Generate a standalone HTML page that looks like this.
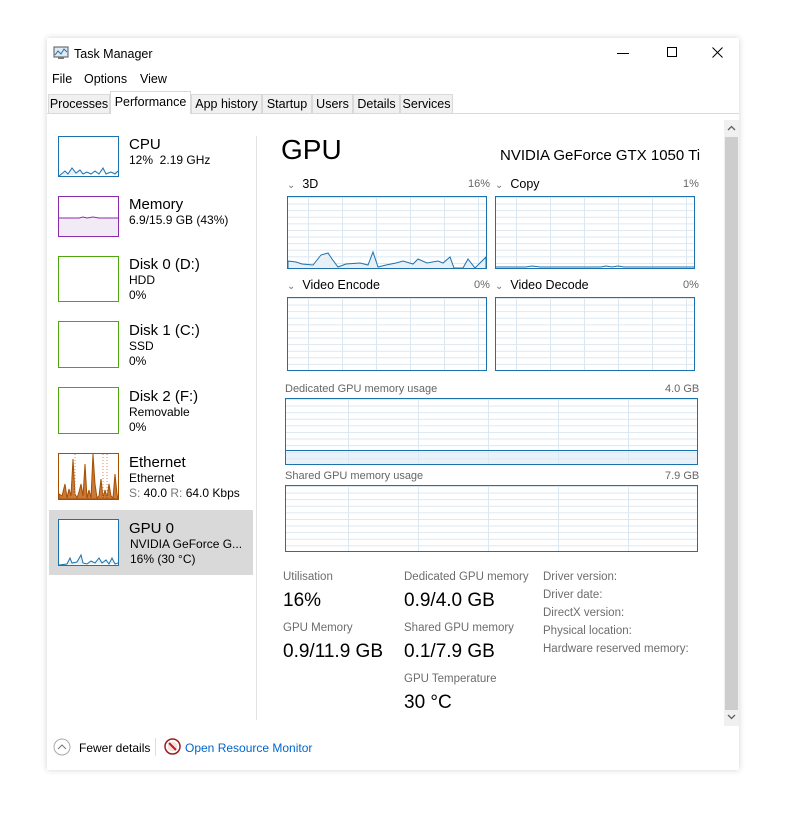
<!DOCTYPE html>
<html><head><meta charset="utf-8"><style>
*{margin:0;padding:0;box-sizing:border-box}
body{width:788px;height:817px;background:#fff;font-family:"Liberation Sans",sans-serif;position:relative;overflow:hidden;color:#000}
.a{position:absolute;white-space:nowrap}
#win{position:absolute;left:47px;top:38px;width:692px;height:732px;background:#fff;box-shadow:0 0 6px rgba(0,0,0,.18)}
.tab{position:absolute;top:94px;height:20px;background:#f0f0f0;border:1px solid #d9d9d9;font-size:12.5px;line-height:19px;text-align:center;color:#000}
.thumb{position:absolute;left:58px;width:61px;border:1px solid}
.g{position:absolute;border:1px solid #1c72ad;background-color:#fff;
background-image:linear-gradient(#dbe7f1 1px,transparent 1px),linear-gradient(90deg,#dbe7f1 1px,transparent 1px);background-size:100% 6.6px,34px 100%;background-position:0 0,20px 0}
.gb{background-size:100% 6.6px,70px 100%;background-position:0 0,62px 0}
.lbl{font-size:12.5px;color:#000}
.sm{font-size:11px;color:#666}
.t1{font-size:15px}
.t2{font-size:12px}
.k{font-size:11.5px;color:#6d6d6d}
.v{font-size:19px;color:#000}
.t{top:2px;position:relative}
</style></head><body>
<div id="win"></div>
<svg class="a" style="left:53px;top:46px" width="16" height="14"><rect x="1" y="1" width="14" height="10" fill="#dfe9f3" stroke="#555"/><polyline points="2,9 5,5 8,8 11,3 14,6" fill="none" stroke="#1c72ad"/><rect x="5" y="11" width="6" height="2" fill="#777"/></svg>
<div class="a" style="left:74px;top:47px;font-size:12.5px">Task Manager</div>
<div class="a" style="left:617px;top:53px;width:12px;height:1px;background:#000"></div>
<div class="a" style="left:667px;top:47px;width:10px;height:10px;border:1px solid #000"></div>
<svg class="a" style="left:712px;top:47px" width="11" height="11"><path d="M0.5 0.5L10.5 10.5M10.5 0.5L0.5 10.5" stroke="#000" stroke-width="1"/></svg>
<div class="a" style="left:52px;top:72px;font-size:12.5px">File</div>
<div class="a" style="left:84px;top:72px;font-size:12.5px">Options</div>
<div class="a" style="left:140px;top:72px;font-size:12.5px">View</div>
<div class="a" style="left:47px;top:113px;width:692px;height:1px;background:#d9d9d9"></div>
<div class="tab" style="left:48px;width:62px">Processes</div>
<div class="tab" style="left:110px;top:91px;height:23px;width:81px;background:#fff;border-bottom:none;line-height:20px">Performance</div>
<div class="tab" style="left:191px;width:71px">App history</div>
<div class="tab" style="left:262px;width:50px">Startup</div>
<div class="tab" style="left:312px;width:41px">Users</div>
<div class="tab" style="left:353px;width:47px">Details</div>
<div class="tab" style="left:400px;width:53px">Services</div>
<div class="a" style="left:49px;top:510px;width:204px;height:65px;background:#d9d9d9"></div>
<div class="a" style="left:256px;top:136px;width:1px;height:584px;background:#e3e3e3"></div>
<div class="thumb" style="top:136px;height:41px;border-color:#1c72ad"><svg width="59" height="39" style="display:block"><polyline points="0,39 6,34 9,37 13,31 17,36 21,33 24,37 28,35 32,37 36,34 40,37 44,31 47,37 52,35 56,37 59,34" fill="#e7f0f7" stroke="#1c72ad"/></svg></div>
<div class="a t1" style="left:129px;top:136px">CPU</div>
<div class="a t2" style="left:129px;top:153px">12%&nbsp; 2.19 GHz</div>
<div class="thumb" style="top:196px;height:41px;border-color:#8b2bab"><svg width="59" height="39" style="display:block"><rect x="0" y="21" width="59" height="18" fill="#f2eaf5"/><polyline points="0,21 20,21 24,20 28,21 34,20 40,21 59,21" fill="none" stroke="#8b2bab"/></svg></div>
<div class="a t1" style="left:129px;top:196px">Memory</div>
<div class="a t2" style="left:129px;top:213px">6.9/15.9 GB (43%)</div>
<div class="thumb" style="top:256px;height:46px;border-color:#4da60c"></div>
<div class="a t1" style="left:129px;top:256px">Disk 0 (D:)</div>
<div class="a t2" style="left:129px;top:273px">HDD</div>
<div class="a t2" style="left:129px;top:288px">0%</div>
<div class="thumb" style="top:321px;height:47px;border-color:#4da60c"></div>
<div class="a t1" style="left:129px;top:322px">Disk 1 (C:)</div>
<div class="a t2" style="left:129px;top:339px">SSD</div>
<div class="a t2" style="left:129px;top:354px">0%</div>
<div class="thumb" style="top:387px;height:47px;border-color:#4da60c"></div>
<div class="a t1" style="left:129px;top:388px">Disk 2 (F:)</div>
<div class="a t2" style="left:129px;top:405px">Removable</div>
<div class="a t2" style="left:129px;top:420px">0%</div>
<div class="thumb" style="top:453px;height:47px;border-color:#a74f01"><svg width="59" height="45" style="display:block"><polygon points="0,45 0,40 3,42 6,30 8,44 10,35 12,42 14,5 16,40 18,44 20,38 22,30 24,42 26,10 28,44 30,36 32,44 34,0 36,30 38,44 40,42 42,25 44,44 46,36 48,44 50,30 52,42 54,44 56,20 58,40 59,45" fill="#c87a3a" stroke="#a74f01"/><line x1="16" y1="0" x2="16" y2="45" stroke="#d98f5c" stroke-dasharray="1 2"/><line x1="44" y1="0" x2="44" y2="45" stroke="#d98f5c" stroke-dasharray="1 2"/><line x1="48" y1="0" x2="48" y2="45" stroke="#d98f5c" stroke-dasharray="1 2"/></svg></div>
<div class="a t1" style="left:129px;top:454px">Ethernet</div>
<div class="a t2" style="left:129px;top:471px">Ethernet</div>
<div class="a t2" style="left:129px;top:486px"><span style="color:#777">S:</span> 40.0 <span style="color:#777">R:</span> 64.0 Kbps</div>
<div class="thumb" style="top:519px;height:47px;border-color:#1c72ad;background:#fff"><svg width="59" height="45" style="display:block"><polyline points="0,45 8,44 11,38 13,43 18,42 22,35 24,43 28,44 32,41 36,43 40,38 43,43 47,40 50,44 53,38 56,44 59,43" fill="#e7f0f7" stroke="#1c72ad"/></svg></div>
<div class="a t1" style="left:129px;top:520px">GPU 0</div>
<div class="a t2" style="left:130px;top:537px">NVIDIA GeForce G...</div>
<div class="a t2" style="left:130px;top:552px">16% (30 °C)</div>
<div class="a" style="left:281px;top:134px;font-size:28px">GPU</div>
<div class="a" style="left:500px;top:147px;font-size:15px">NVIDIA GeForce GTX 1050 Ti</div>
<div class="a lbl" style="left:287px;top:177px"><span style="color:#777;font-size:10px">⌄</span>&nbsp; 3D</div>
<div class="a sm" style="left:468px;top:178px">16%</div>
<div class="a lbl" style="left:495px;top:177px"><span style="color:#777;font-size:10px">⌄</span>&nbsp; Copy</div>
<div class="a sm" style="left:683px;top:178px">1%</div>
<div class="g" style="left:287px;top:196px;width:200px;height:73px"><svg width="198" height="71" style="display:block;position:absolute"><polyline points="0,71 0,64 8,65 14,67 25,68 33,58 40,56 44,62 50,70 58,67 72,66 80,68 85,55 90,70 98,68 108,66 115,64 125,67 130,62 139,66 150,64 155,66 162,60 166,71 175,71 180,62 187,71 198,60 198,71" fill="#e7f0f7" stroke="#1c72ad"/></svg></div>
<div class="g" style="left:495px;top:196px;width:200px;height:73px"><svg width="198" height="71" style="display:block;position:absolute"><polyline points="0,70 30,70 36,69 44,70 105,70 110,69 116,70 122,69 128,70 198,70" fill="none" stroke="#1c72ad"/></svg></div>
<div class="a lbl" style="left:287px;top:278px"><span style="color:#777;font-size:10px">⌄</span>&nbsp; Video Encode</div>
<div class="a sm" style="left:474px;top:279px">0%</div>
<div class="a lbl" style="left:495px;top:278px"><span style="color:#777;font-size:10px">⌄</span>&nbsp; Video Decode</div>
<div class="a sm" style="left:683px;top:279px">0%</div>
<div class="g" style="left:287px;top:297px;width:200px;height:74px"></div>
<div class="g" style="left:495px;top:297px;width:200px;height:74px"></div>
<div class="a sm" style="left:285px;top:383px">Dedicated GPU memory usage</div>
<div class="a sm" style="left:665px;top:383px">4.0 GB</div>
<div class="g gb" style="left:285px;top:398px;width:413px;height:67px"><div style="position:absolute;left:0;right:0;top:51px;bottom:0;background:rgba(220,234,245,.6);border-top:1px solid #1c72ad"></div></div>
<div class="a sm" style="left:285px;top:470px">Shared GPU memory usage</div>
<div class="a sm" style="left:665px;top:470px">7.9 GB</div>
<div class="g gb" style="left:285px;top:485px;width:413px;height:67px"></div>
<div class="a k" style="left:283px;top:571px">Utilisation</div>
<div class="a v" style="left:283px;top:590px">16%</div>
<div class="a k" style="left:283px;top:622px">GPU Memory</div>
<div class="a v" style="left:283px;top:641px">0.9/11.9 GB</div>
<div class="a k" style="left:404px;top:571px">Dedicated GPU memory</div>
<div class="a v" style="left:404px;top:590px">0.9/4.0 GB</div>
<div class="a k" style="left:404px;top:622px">Shared GPU memory</div>
<div class="a v" style="left:404px;top:641px">0.1/7.9 GB</div>
<div class="a k" style="left:404px;top:673px">GPU Temperature</div>
<div class="a v" style="left:404px;top:692px">30 °C</div>
<div class="a k" style="left:543px;top:571px">Driver version:</div>
<div class="a k" style="left:543px;top:589px">Driver date:</div>
<div class="a k" style="left:543px;top:607px">DirectX version:</div>
<div class="a k" style="left:543px;top:625px">Physical location:</div>
<div class="a k" style="left:543px;top:643px">Hardware reserved memory:</div>
<div class="a" style="left:724px;top:120px;width:15px;height:606px;background:#f0f0f0"></div>
<div class="a" style="left:725px;top:137px;width:13px;height:573px;background:#cdcdcd"></div>
<svg class="a" style="left:727px;top:125px" width="9" height="6"><polyline points="1,5 4.5,1.5 8,5" fill="none" stroke="#606060" stroke-width="1.3"/></svg>
<svg class="a" style="left:727px;top:714px" width="9" height="6"><polyline points="1,1 4.5,4.5 8,1" fill="none" stroke="#606060" stroke-width="1.3"/></svg>
<svg class="a" style="left:53px;top:738px" width="18" height="18"><circle cx="9" cy="9" r="8" fill="#fff" stroke="#aaa"/><polyline points="5,11 9,7 13,11" fill="none" stroke="#777"/></svg>
<div class="a" style="left:79px;top:741px;font-size:12px">Fewer details</div>
<div class="a" style="left:155px;top:738px;width:1px;height:18px;background:#ddd"></div>
<svg class="a" style="left:164px;top:738px" width="17" height="17"><circle cx="8.5" cy="8.5" r="7.5" fill="#fff" stroke="#9e1b1b" stroke-width="1.5"/><circle cx="8.5" cy="8.5" r="5" fill="#f5e0e0"/><line x1="5" y1="5" x2="12" y2="12" stroke="#c01e1e" stroke-width="2"/></svg>
<div class="a" style="left:185px;top:741px;font-size:12px;color:#0066cc">Open Resource Monitor</div>
</body></html>
